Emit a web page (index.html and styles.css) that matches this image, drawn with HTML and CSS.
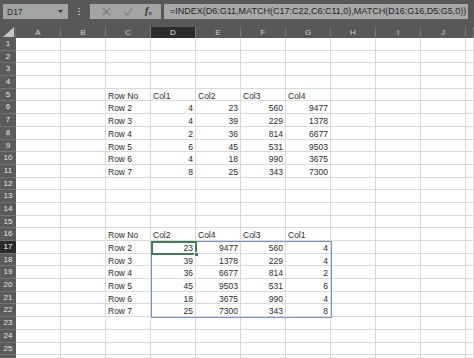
FILE: index.html
```html
<!DOCTYPE html>
<html>
<head>
<meta charset="utf-8">
<link rel="stylesheet" href="styles.css">
</head>
<body>
<div class="app">
  <div class="fbar">
    <div class="namebox"><span>D17</span><svg class="dd" width="5" height="3" viewBox="0 0 5 3"><path d="M0 0h5L2.5 3z" fill="#3a3a3a"/></svg></div>
    <div class="dots"><i></i><i></i><i></i></div>
    <div class="btns">
      <svg width="9" height="9" viewBox="0 0 9 9"><path d="M1 1l7 7M8 1L1 8" stroke="#7c7c7c" stroke-width="1.1" fill="none"/></svg>
      <svg width="10" height="9" viewBox="0 0 10 9"><path d="M1 5l3 3 5-7" stroke="#7c7c7c" stroke-width="1.1" fill="none"/></svg>
      <span class="fx">f<sub>x</sub></span>
    </div>
    <div class="finput">=INDEX(D6:G11,MATCH(C17:C22,C6:C11,0),MATCH(D16:G16,D5:G5,0))</div>
  </div>
  <div class="sheet">
    <div class="corner"><svg width="11" height="10" viewBox="0 0 11 10"><path d="M11 0V10H0z" fill="#c4c4c4"/></svg></div>
    <div class="ch">A</div><div class="ch">B</div><div class="ch">C</div><div class="ch sel">D</div><div class="ch">E</div><div class="ch">F</div><div class="ch">G</div><div class="ch">H</div><div class="ch">I</div><div class="ch">J</div><div class="ch"></div>

    <div class="rh">1</div><div class="c"></div><div class="c"></div><div class="c"></div><div class="c"></div><div class="c"></div><div class="c"></div><div class="c"></div><div class="c"></div><div class="c"></div><div class="c"></div><div class="c"></div>
    <div class="rh">2</div><div class="c"></div><div class="c"></div><div class="c"></div><div class="c"></div><div class="c"></div><div class="c"></div><div class="c"></div><div class="c"></div><div class="c"></div><div class="c"></div><div class="c"></div>
    <div class="rh">3</div><div class="c"></div><div class="c"></div><div class="c"></div><div class="c"></div><div class="c"></div><div class="c"></div><div class="c"></div><div class="c"></div><div class="c"></div><div class="c"></div><div class="c"></div>
    <div class="rh">4</div><div class="c"></div><div class="c"></div><div class="c"></div><div class="c"></div><div class="c"></div><div class="c"></div><div class="c"></div><div class="c"></div><div class="c"></div><div class="c"></div><div class="c"></div>
    <div class="rh">5</div><div class="c"></div><div class="c"></div><div class="c">Row No</div><div class="c">Col1</div><div class="c">Col2</div><div class="c">Col3</div><div class="c">Col4</div><div class="c"></div><div class="c"></div><div class="c"></div><div class="c"></div>
    <div class="rh">6</div><div class="c"></div><div class="c"></div><div class="c">Row 2</div><div class="c n">4</div><div class="c n">23</div><div class="c n">560</div><div class="c n">9477</div><div class="c"></div><div class="c"></div><div class="c"></div><div class="c"></div>
    <div class="rh">7</div><div class="c"></div><div class="c"></div><div class="c">Row 3</div><div class="c n">4</div><div class="c n">39</div><div class="c n">229</div><div class="c n">1378</div><div class="c"></div><div class="c"></div><div class="c"></div><div class="c"></div>
    <div class="rh">8</div><div class="c"></div><div class="c"></div><div class="c">Row 4</div><div class="c n">2</div><div class="c n">36</div><div class="c n">814</div><div class="c n">6677</div><div class="c"></div><div class="c"></div><div class="c"></div><div class="c"></div>
    <div class="rh">9</div><div class="c"></div><div class="c"></div><div class="c">Row 5</div><div class="c n">6</div><div class="c n">45</div><div class="c n">531</div><div class="c n">9503</div><div class="c"></div><div class="c"></div><div class="c"></div><div class="c"></div>
    <div class="rh">10</div><div class="c"></div><div class="c"></div><div class="c">Row 6</div><div class="c n">4</div><div class="c n">18</div><div class="c n">990</div><div class="c n">3675</div><div class="c"></div><div class="c"></div><div class="c"></div><div class="c"></div>
    <div class="rh">11</div><div class="c"></div><div class="c"></div><div class="c">Row 7</div><div class="c n">8</div><div class="c n">25</div><div class="c n">343</div><div class="c n">7300</div><div class="c"></div><div class="c"></div><div class="c"></div><div class="c"></div>
    <div class="rh">12</div><div class="c"></div><div class="c"></div><div class="c"></div><div class="c"></div><div class="c"></div><div class="c"></div><div class="c"></div><div class="c"></div><div class="c"></div><div class="c"></div><div class="c"></div>
    <div class="rh">13</div><div class="c"></div><div class="c"></div><div class="c"></div><div class="c"></div><div class="c"></div><div class="c"></div><div class="c"></div><div class="c"></div><div class="c"></div><div class="c"></div><div class="c"></div>
    <div class="rh">14</div><div class="c"></div><div class="c"></div><div class="c"></div><div class="c"></div><div class="c"></div><div class="c"></div><div class="c"></div><div class="c"></div><div class="c"></div><div class="c"></div><div class="c"></div>
    <div class="rh">15</div><div class="c"></div><div class="c"></div><div class="c"></div><div class="c"></div><div class="c"></div><div class="c"></div><div class="c"></div><div class="c"></div><div class="c"></div><div class="c"></div><div class="c"></div>
    <div class="rh">16</div><div class="c"></div><div class="c"></div><div class="c">Row No</div><div class="c">Col2</div><div class="c">Col4</div><div class="c">Col3</div><div class="c">Col1</div><div class="c"></div><div class="c"></div><div class="c"></div><div class="c"></div>
    <div class="rh sel">17</div><div class="c"></div><div class="c"></div><div class="c">Row 2</div><div class="c n">23</div><div class="c n">9477</div><div class="c n">560</div><div class="c n">4</div><div class="c"></div><div class="c"></div><div class="c"></div><div class="c"></div>
    <div class="rh">18</div><div class="c"></div><div class="c"></div><div class="c">Row 3</div><div class="c n">39</div><div class="c n">1378</div><div class="c n">229</div><div class="c n">4</div><div class="c"></div><div class="c"></div><div class="c"></div><div class="c"></div>
    <div class="rh">19</div><div class="c"></div><div class="c"></div><div class="c">Row 4</div><div class="c n">36</div><div class="c n">6677</div><div class="c n">814</div><div class="c n">2</div><div class="c"></div><div class="c"></div><div class="c"></div><div class="c"></div>
    <div class="rh">20</div><div class="c"></div><div class="c"></div><div class="c">Row 5</div><div class="c n">45</div><div class="c n">9503</div><div class="c n">531</div><div class="c n">6</div><div class="c"></div><div class="c"></div><div class="c"></div><div class="c"></div>
    <div class="rh">21</div><div class="c"></div><div class="c"></div><div class="c">Row 6</div><div class="c n">18</div><div class="c n">3675</div><div class="c n">990</div><div class="c n">4</div><div class="c"></div><div class="c"></div><div class="c"></div><div class="c"></div>
    <div class="rh">22</div><div class="c"></div><div class="c"></div><div class="c">Row 7</div><div class="c n">25</div><div class="c n">7300</div><div class="c n">343</div><div class="c n">8</div><div class="c"></div><div class="c"></div><div class="c"></div><div class="c"></div>
    <div class="rh">23</div><div class="c"></div><div class="c"></div><div class="c"></div><div class="c"></div><div class="c"></div><div class="c"></div><div class="c"></div><div class="c"></div><div class="c"></div><div class="c"></div><div class="c"></div>
    <div class="rh">24</div><div class="c"></div><div class="c"></div><div class="c"></div><div class="c"></div><div class="c"></div><div class="c"></div><div class="c"></div><div class="c"></div><div class="c"></div><div class="c"></div><div class="c"></div>
    <div class="rh">25</div><div class="c"></div><div class="c"></div><div class="c"></div><div class="c"></div><div class="c"></div><div class="c"></div><div class="c"></div><div class="c"></div><div class="c"></div><div class="c"></div><div class="c"></div>
    <div class="rh"></div><div class="c"></div><div class="c"></div><div class="c"></div><div class="c"></div><div class="c"></div><div class="c"></div><div class="c"></div><div class="c"></div><div class="c"></div><div class="c"></div><div class="c"></div>

    <div class="range"></div>
    <div class="active"><i class="handle"></i></div>
  </div>
</div>
</body>
</html>
```
FILE: styles.css
```css
* { box-sizing: border-box; }
html, body { margin: 0; padding: 0; background: #fff; }
body { width: 474px; height: 358px; overflow: hidden; font-family: "Liberation Sans", Arial, sans-serif; }
.app { width: 474px; }

.fbar {
  height: 27px;
  background: #585858;
  display: flex;
  align-items: flex-start;
  padding: 4px 0 0 3px;
}
.namebox {
  width: 65px; height: 15px;
  background: #a3a3a3;
  display: flex; align-items: center; justify-content: space-between;
  padding: 0 5px 0 4px;
  font-size: 8.5px; color: #2c2c2c;
}
.dots { width: 22px; height: 15px; display: flex; flex-direction: column; align-items: center; justify-content: center; gap: 1.5px; }
.dots i { display: block; width: 1.5px; height: 1.5px; background: #b8b8b8; }
.btns {
  width: 71px; height: 15px;
  background: #a3a3a3;
  display: flex; align-items: center; justify-content: space-around;
  padding: 0 3px 0 6px;
}
.fx { font-family: "Liberation Serif", serif; font-style: italic; font-size: 10px; color: #2f2f2f; line-height: 1; font-weight: bold; }
.fx sub { font-size: 7px; vertical-align: -1px; }
.finput {
  margin-left: 3px;
  width: 304px; height: 15px;
  background: #a8a8a8;
  font-size: 9px; color: #262626;
  line-height: 15px;
  padding-left: 6px;
  white-space: nowrap; overflow: hidden;
}

.sheet {
  position: relative;
  display: grid;
  grid-template-columns: 16px repeat(10, 45px) 1fr;
  grid-template-rows: 11px;
  grid-auto-rows: 12.7px;
  font-size: 8.5px;
  color: #2a2a2a;
}
.corner { background: #585858; border-right: 1px solid #6e6e6e; display: flex; align-items: flex-end; justify-content: flex-end; padding: 0 1px 1px 0; }
.ch {
  background: #585858;
  color: #cfcfcf;
  text-align: center;
  line-height: 11px;
  font-size: 8px;
  border-right: 1px solid #767676;
}
.ch.sel { background: #2b2b2b; color: #e0e0e0; }
.rh {
  background: #5b5b5b;
  color: #e6e6e6;
  text-align: center;
  font-size: 8px;
  line-height: 12.7px;
  border-bottom: 1px solid #727272;
}
.rh.sel { background: #2b2b2b; color: #fff; }
.c {
  border-right: 1px solid #dadada;
  border-bottom: 1px solid #dadada;
  line-height: 12px;
  padding: 1px 2px 0;
  white-space: nowrap;
  overflow: hidden;
}
.c.n { text-align: right; }

.range {
  position: absolute;
  left: 151px; top: 214.2px;
  width: 181px; height: 77px;
  border: 1px solid #7193cf;
  pointer-events: none;
}
.active {
  position: absolute;
  left: 150.5px; top: 213.5px;
  width: 46px; height: 14px;
  border: 2px solid #3f7f55;
}
.handle {
  position: absolute;
  right: -4px; bottom: -4px;
  width: 5px; height: 5px;
  background: #3f7f55;
  border: 1px solid #fff;
}
```
